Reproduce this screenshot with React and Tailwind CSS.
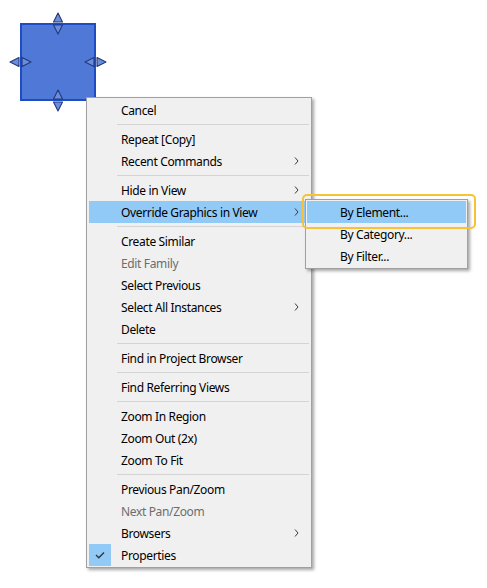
import React from "react";

const items = [
  { t: "Cancel" },
  { sep: true },
  { t: "Repeat [Copy]" },
  { t: "Recent Commands", sub: true },
  { sep: true },
  { t: "Hide in View", sub: true },
  { t: "Override Graphics in View", sub: true, hl: true },
  { sep: true },
  { t: "Create Similar" },
  { t: "Edit Family", dis: true },
  { t: "Select Previous" },
  { t: "Select All Instances", sub: true },
  { t: "Delete" },
  { sep: true },
  { t: "Find in Project Browser" },
  { sep: true },
  { t: "Find Referring Views" },
  { sep: true },
  { t: "Zoom In Region" },
  { t: "Zoom Out (2x)" },
  { t: "Zoom To Fit" },
  { sep: true },
  { t: "Previous Pan/Zoom" },
  { t: "Next Pan/Zoom", dis: true },
  { t: "Browsers", sub: true },
  { t: "Properties", check: true },
];

function Chevron() {
  return (
    <svg width="5" height="8" viewBox="0 0 5 8" className="absolute right-[10px] top-[7px]">
      <path d="M1 0.5 L4 4 L1 7.5" fill="none" stroke="#3a3a3a" strokeWidth="1" />
    </svg>
  );
}

function Row({ it }) {
  return (
    <div
      className={
        "relative h-[22px] flex items-center pl-[32px] pt-[2px] " +
        (it.hl ? "bg-[#91c9f7] " : "") +
        (it.dis ? "text-[#6d6d6d]" : "text-black")
      }
    >
      {it.check && (
        <div className="absolute left-0 top-0 w-[22px] h-[22px] bg-[#91c9f7] flex items-center justify-center">
          <svg width="12" height="10" viewBox="0 0 12 10">
            <path d="M2 5 L4.8 7.8 L10 2.5" fill="none" stroke="#333" strokeWidth="1.3" />
          </svg>
        </div>
      )}
      <span className="leading-none">{it.t}</span>
      {it.sub && <Chevron />}
    </div>
  );
}

function Tri({ points }) {
  return <polygon points={points} fill="#6a8ede" stroke="#24387a" strokeWidth="1.1" strokeLinejoin="round" />;
}

function SubRow({ children, hl }) {
  return (
    <div className={"h-[22px] flex items-center pl-[33px] pt-[2px] " + (hl ? "bg-[#91c9f7]" : "")}>
      <span className="leading-none">{children}</span>
    </div>
  );
}

export default function App() {
  return (
    <div
      className="relative w-[487px] h-[588px] bg-white overflow-hidden text-[12px] tracking-[-0.35px]"
      style={{ fontFamily: '"Noto Sans", "Open Sans", sans-serif' }}
    >
      <svg className="absolute left-0 top-0" width="120" height="115" viewBox="0 0 120 115">
        <rect x="21" y="24" width="74" height="76" fill="#5078d6" stroke="#1d4cc4" strokeWidth="2" />
        <Tri points="58,13 53.5,22 62.5,22" />
        <Tri points="58,34 53.5,25 62.5,25" />
        <Tri points="58,90 53.5,99 62.5,99" />
        <Tri points="58,111 53.5,102 62.5,102" />
        <Tri points="10,62 19,57.5 19,66.5" />
        <Tri points="31,62 22,57.5 22,66.5" />
        <Tri points="85,62 94,57.5 94,66.5" />
        <Tri points="106,62 97,57.5 97,66.5" />
      </svg>

      {/* main context menu */}
      <div className="absolute left-[86px] top-[97px] w-[226px] flex flex-col bg-[#f0f0f0] border border-[#a0a0a0] px-[2px] py-[1px] shadow-[2px_2px_3px_rgba(0,0,0,0.35)]">
        {items.map((it, i) =>
          it.sep ? (
            <div key={i} className="h-[7px] flex items-center pl-[28px]">
              <div className="h-[1px] w-full bg-[#d4d4d4]" />
            </div>
          ) : (
            <Row key={i} it={it} />
          )
        )}
      </div>

      {/* submenu */}
      <div className="absolute left-[305px] top-[199px] w-[163px] flex flex-col bg-[#f0f0f0] border border-[#a0a0a0] p-[1px] shadow-[2px_2px_3px_rgba(0,0,0,0.35)]">
        <SubRow hl>By Element...</SubRow>
        <SubRow>By Category...</SubRow>
        <SubRow>By Filter...</SubRow>
      </div>

      {/* callout highlight */}
      <div className="absolute left-[302px] top-[194px] w-[174px] h-[35px] rounded-[5px] border-2 border-[#f7c235]" />
    </div>
  );
}
